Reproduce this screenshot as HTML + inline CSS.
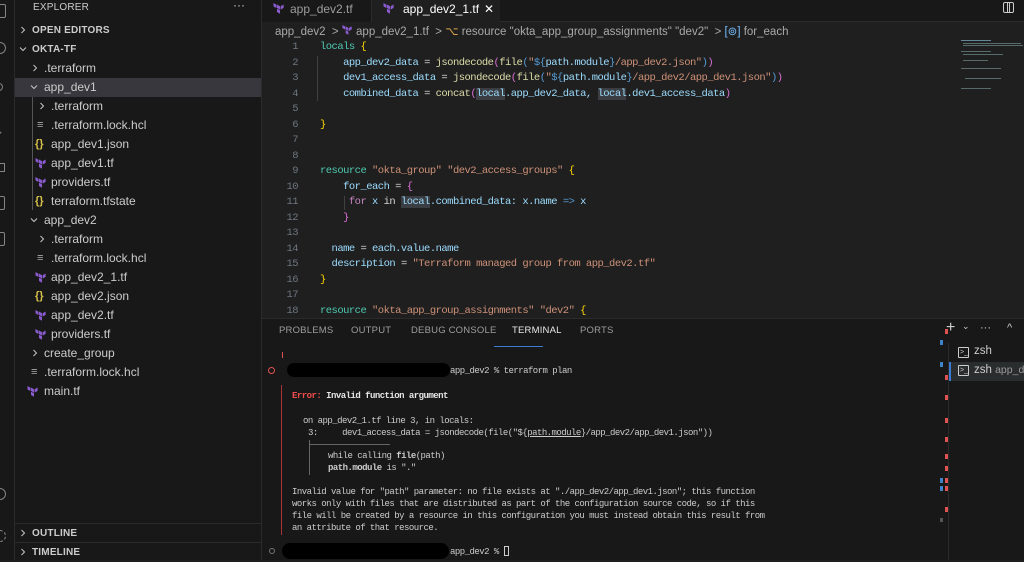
<!DOCTYPE html>
<html><head><meta charset="utf-8">
<style>
*{margin:0;padding:0;box-sizing:border-box}
body{width:1024px;height:560px;overflow:hidden;background:#1f1f1f;font-family:"Liberation Sans",sans-serif;color:#ccc;position:relative}
.abs{position:absolute}
#act{left:0;top:0;width:15px;height:560px;background:#181818;border-right:1px solid #2b2b2b}
#side{left:15px;top:0;width:247px;height:560px;background:#181818;border-right:1px solid #2b2b2b}
.row{position:absolute;left:0;width:246px;height:19px;font-size:12px;line-height:19px;color:#ccc;white-space:nowrap}
.hd{font-size:10px;font-weight:bold;color:#ccc;letter-spacing:.2px}
.chev{position:absolute;top:5px}
.js{color:#d6c14a;font-size:11px;font-weight:bold}
.lines{color:#aaa;font-size:11px}
#tabs{left:262px;top:0;width:762px;height:22px;background:#181818;border-bottom:1px solid #2b2b2b}
.mono{font-family:"Liberation Mono",monospace}
.cl{position:absolute;left:262px;width:690px;height:15.5px;font-size:10.5px;letter-spacing:-0.52px;line-height:15.5px;white-space:pre;color:#9cdcfe}
.ln{position:absolute;width:36px;text-align:right;color:#6e7681;left:0}
.tx{position:absolute;left:58px}
.k{color:#4ec9b0}.s{color:#ce9178}.f{color:#dcdcaa}.y{color:#ffd700}.p{color:#da70d6}.w{color:#d4d4d4}.c{color:#569cd6}.kw{color:#c586c0}
.hl{background:#3a3d41}
#panel{left:262px;top:318px;width:762px;height:242px;background:#181818;border-top:1px solid #2b2b2b}
.pt{position:absolute;top:6px;font-size:9.5px;color:#9d9d9d;letter-spacing:.2px}
.tl{position:absolute;left:292px;font-size:9px;letter-spacing:-0.53px;line-height:12.2px;white-space:pre;color:#ccc}
.mk{position:absolute;left:945px;width:3px;height:5px;background:#e05252}
.mb{position:absolute;left:940px;width:3px;height:5px;background:#3f84c8}
</style></head><body>

<svg width="0" height="0" style="position:absolute"><defs>
<symbol id="tfi" viewBox="0 0 12 12"><path d="M4 1.5l3 1.7v3.4L4 4.9z M7.6 3.2l3 -1.7v3.4l-3 1.7z M0.5 0l3 1.7v3.4L0.5 3.4z M4 5.6l3 1.7v3.4L4 9z" fill="#8a5ccf"/></symbol>
<symbol id="cr" viewBox="0 0 8 8"><path d="M2.5 1l3 3-3 3" fill="none" stroke="#c5c5c5" stroke-width="1"/></symbol>
<symbol id="cd" viewBox="0 0 8 8"><path d="M1 2.5l3 3 3-3" fill="none" stroke="#c5c5c5" stroke-width="1"/></symbol>
</defs></svg>

<div id="act" class="abs">
 <div class="abs" style="left:-4px;top:4px;width:10px;height:14px;border:1.5px solid #858585;border-radius:2px"></div>
 <div class="abs" style="left:-6px;top:42px;width:12px;height:12px;border:1.5px solid #858585;border-radius:50%"></div>
 <div class="abs" style="left:-5px;top:83px;width:8px;height:8px;border:1.5px solid #858585;border-radius:50%"></div>
 <div class="abs" style="left:-4px;top:128px;color:#858585;font-size:10px">&gt;</div>
 <div class="abs" style="left:-4px;top:163px;width:9px;height:9px;border:1.5px solid #858585"></div>
 <div class="abs" style="left:-4px;top:196px;width:9px;height:14px;border:1.5px solid #858585;border-radius:2px"></div>
 <div class="abs" style="left:-4px;top:232px;width:9px;height:14px;border:1.5px solid #858585;border-radius:2px"></div>
 <div class="abs" style="left:-6px;top:488px;width:12px;height:12px;border:1.5px solid #858585;border-radius:50%"></div>
 <div class="abs" style="left:-6px;top:530px;width:12px;height:12px;border:1.5px dashed #858585;border-radius:50%"></div>
</div>

<div id="side" class="abs">
 <div class="row hd" style="top:-2px;left:18px;font-weight:normal;font-size:10px">EXPLORER</div>
 <div class="row" style="top:-4px;left:218px;width:20px;color:#ccc;font-size:12px">···</div>
 <div class="row" style="top:21px"><svg class="chev" style="left:4px" width="8" height="8"><use href="#cr"/></svg><span class="hd abs" style="left:17px">OPEN EDITORS</span></div>
 <div class="row" style="top:40px"><svg class="chev" style="left:4px" width="8" height="8"><use href="#cd"/></svg><span class="hd abs" style="left:17px">OKTA-TF</span></div>
 <div class="row" style="top:59px"><svg class="chev" style="left:16px" width="8" height="8"><use href="#cr"/></svg><span class="abs" style="left:29px">.terraform</span></div>
 <div class="row" style="top:78px;background:#37373d"><svg class="chev" style="left:15px" width="8" height="8"><use href="#cd"/></svg><span class="abs" style="left:29px">app_dev1</span></div>
 <div class="abs" style="left:17px;top:97px;width:1px;height:113px;background:#555"></div>
 <div class="row" style="top:97px"><svg class="chev" style="left:23px" width="8" height="8"><use href="#cr"/></svg><span class="abs" style="left:36px">.terraform</span></div>
 <div class="row" style="top:116px"><span class="abs lines" style="left:22px">&#8801;</span><span class="abs" style="left:36px">.terraform.lock.hcl</span></div>
 <div class="row" style="top:135px"><span class="abs js" style="left:20px">{}</span><span class="abs" style="left:36px">app_dev1.json</span></div>
 <div class="row" style="top:154px"><svg class="abs" style="left:20px;top:4px" width="12" height="12"><use href="#tfi"/></svg><span class="abs" style="left:36px">app_dev1.tf</span></div>
 <div class="row" style="top:173px"><svg class="abs" style="left:20px;top:4px" width="12" height="12"><use href="#tfi"/></svg><span class="abs" style="left:36px">providers.tf</span></div>
 <div class="row" style="top:192px"><span class="abs js" style="left:20px">{}</span><span class="abs" style="left:36px">terraform.tfstate</span></div>
 <div class="row" style="top:211px"><svg class="chev" style="left:15px" width="8" height="8"><use href="#cd"/></svg><span class="abs" style="left:29px">app_dev2</span></div>
 <div class="row" style="top:230px"><svg class="chev" style="left:23px" width="8" height="8"><use href="#cr"/></svg><span class="abs" style="left:36px">.terraform</span></div>
 <div class="row" style="top:249px"><span class="abs lines" style="left:22px">&#8801;</span><span class="abs" style="left:36px">.terraform.lock.hcl</span></div>
 <div class="row" style="top:268px"><svg class="abs" style="left:20px;top:4px" width="12" height="12"><use href="#tfi"/></svg><span class="abs" style="left:36px">app_dev2_1.tf</span></div>
 <div class="row" style="top:287px"><span class="abs js" style="left:20px">{}</span><span class="abs" style="left:36px">app_dev2.json</span></div>
 <div class="row" style="top:306px"><svg class="abs" style="left:20px;top:4px" width="12" height="12"><use href="#tfi"/></svg><span class="abs" style="left:36px">app_dev2.tf</span></div>
 <div class="row" style="top:325px"><svg class="abs" style="left:20px;top:4px" width="12" height="12"><use href="#tfi"/></svg><span class="abs" style="left:36px">providers.tf</span></div>
 <div class="row" style="top:344px"><svg class="chev" style="left:16px" width="8" height="8"><use href="#cr"/></svg><span class="abs" style="left:29px">create_group</span></div>
 <div class="row" style="top:363px"><span class="abs lines" style="left:16px">&#8801;</span><span class="abs" style="left:29px">.terraform.lock.hcl</span></div>
 <div class="row" style="top:382px"><svg class="abs" style="left:12px;top:4px" width="12" height="12"><use href="#tfi"/></svg><span class="abs" style="left:29px">main.tf</span></div>
 <div class="abs" style="left:0;top:523px;width:246px;height:1px;background:#2b2b2b"></div>
 <div class="row" style="top:524px"><svg class="chev" style="left:4px" width="8" height="8"><use href="#cr"/></svg><span class="hd abs" style="left:17px">OUTLINE</span></div>
 <div class="abs" style="left:0;top:542px;width:246px;height:1px;background:#2b2b2b"></div>
 <div class="row" style="top:543px"><svg class="chev" style="left:4px" width="8" height="8"><use href="#cr"/></svg><span class="hd abs" style="left:17px">TIMELINE</span></div>
</div>

<div id="tabs" class="abs">
 <div class="abs" style="left:0;top:0;width:110px;height:22px;background:#181818;border-right:1px solid #2b2b2b;font-size:12px;line-height:18px;color:#9d9d9d"><svg class="abs" style="left:11px;top:3px" width="12" height="12"><use href="#tfi"/></svg><span class="abs" style="left:28px">app_dev2.tf</span></div>
 <div class="abs" style="left:110px;top:0;width:128px;height:22px;background:#1f1f1f;font-size:12px;line-height:18px;color:#fff"><svg class="abs" style="left:11px;top:3px" width="12" height="12"><use href="#tfi"/></svg><span class="abs" style="left:31px">app_dev2_1.tf</span><span class="abs" style="left:112px;font-size:12px">✕</span></div>
 <div class="abs" style="left:741px;top:2px;width:11px;height:11px;border:1.3px solid #ccc;border-radius:2px"><div class="abs" style="left:3px;top:0;width:3px;height:9px;border-left:1px solid #ccc;border-right:1px solid #ccc"></div></div>
</div>

<div class="abs" style="left:275px;top:24px;font-size:11.5px;color:#a9a9a9;white-space:nowrap">app_dev2 &nbsp;&gt; <svg style="vertical-align:-1px" width="11" height="11"><use href="#tfi"/></svg> app_dev2_1.tf &nbsp;&gt; <span style="color:#d6a34a">⌥</span> resource "okta_app_group_assignments" "dev2" &nbsp;&gt; <span style="color:#75beff">[⊚]</span> for_each</div>

<div class="mono">
<div class="cl" style="top:40px"><span class="ln">1</span><span class="tx"><span class="k">locals</span> <span class="y">{</span></span></div>
<div class="cl" style="top:55.5px"><span class="ln">2</span><span class="tx">    app_dev2_data <span class="w">=</span> <span class="f">jsondecode</span><span class="p">(</span><span class="f">file</span><span class="c">(</span><span class="s">"<span class="c">${</span><span style="color:#9cdcfe">path.module</span><span class="c">}</span>/app_dev2.json"</span><span class="c">)</span><span class="p">)</span></span></div>
<div class="cl" style="top:71px"><span class="ln">3</span><span class="tx">    dev1_access_data <span class="w">=</span> <span class="f">jsondecode</span><span class="p">(</span><span class="f">file</span><span class="c">(</span><span class="s">"<span class="c">${</span><span style="color:#9cdcfe">path.module</span><span class="c">}</span>/app_dev2/app_dev1.json"</span><span class="c">)</span><span class="p">)</span></span></div>
<div class="cl" style="top:86.5px"><span class="ln">4</span><span class="tx">    combined_data <span class="w">=</span> <span class="f">concat</span><span class="p">(</span><span class="hl">local</span>.app_dev2_data, <span class="hl">local</span>.dev1_access_data<span class="p">)</span></span></div>
<div class="cl" style="top:102px"><span class="ln">5</span></div>
<div class="cl" style="top:117.5px"><span class="ln">6</span><span class="tx"><span class="y">}</span></span></div>
<div class="cl" style="top:133px"><span class="ln">7</span></div>
<div class="cl" style="top:148.5px"><span class="ln">8</span></div>
<div class="cl" style="top:164px"><span class="ln">9</span><span class="tx"><span class="k">resource</span> <span class="s">"okta_group"</span> <span class="s">"dev2_access_groups"</span> <span class="y">{</span></span></div>
<div class="cl" style="top:179.5px"><span class="ln">10</span><span class="tx">    for_each <span class="w">=</span> <span class="p">{</span></span></div>
<div class="cl" style="top:195px"><span class="ln">11</span><span class="tx">     <span class="kw">for</span> x <span class="w">in</span> <span class="hl">local</span>.combined_data: x.name <span class="c">=&gt;</span> x</span></div>
<div class="cl" style="top:210.5px"><span class="ln">12</span><span class="tx">    <span class="p">}</span></span></div>
<div class="cl" style="top:226px"><span class="ln">13</span></div>
<div class="cl" style="top:241.5px"><span class="ln">14</span><span class="tx">  name <span class="w">=</span> each.value.name</span></div>
<div class="cl" style="top:257px"><span class="ln">15</span><span class="tx">  description <span class="w">=</span> <span class="s">"Terraform managed group from app_dev2.tf"</span></span></div>
<div class="cl" style="top:272.5px"><span class="ln">16</span><span class="tx"><span class="y">}</span></span></div>
<div class="cl" style="top:288px"><span class="ln">17</span></div>
<div class="cl" style="top:303.5px"><span class="ln">18</span><span class="tx"><span class="k">resource</span> <span class="s">"okta_app_group_assignments"</span> <span class="s">"dev2"</span> <span class="y">{</span></span></div>
</div>
<div class="abs" style="left:317px;top:56px;width:1px;height:45px;background:#404040"></div>
<div class="abs" style="left:344px;top:196px;width:1px;height:14px;background:#404040"></div>

<div class="abs" style="left:961px;top:40px;width:60px;height:55px;opacity:.55">
 <div class="abs" style="left:0;top:0;width:30px;height:1px;background:#9cdcfe"></div>
 <div class="abs" style="left:2px;top:3px;width:58px;height:1px;background:#8aa"></div>
 <div class="abs" style="left:2px;top:5px;width:60px;height:1px;background:#8aa"></div>
 <div class="abs" style="left:0;top:11px;width:30px;height:1px;background:#8aa"></div>
 <div class="abs" style="left:2px;top:14px;width:40px;height:1px;background:#8aa"></div>
 <div class="abs" style="left:2px;top:20px;width:25px;height:1px;background:#8aa"></div>
 <div class="abs" style="left:0;top:28px;width:40px;height:1px;background:#8aa"></div>
 <div class="abs" style="left:4px;top:38px;width:36px;height:1px;background:#8aa"></div>
 <div class="abs" style="left:0;top:48px;width:30px;height:1px;background:#8aa"></div>
</div>

<div id="panel" class="abs">
 <span class="pt" style="left:17px">PROBLEMS</span>
 <span class="pt" style="left:89px">OUTPUT</span>
 <span class="pt" style="left:149px">DEBUG CONSOLE</span>
 <span class="pt" style="left:250px;color:#e7e7e7">TERMINAL</span>
 <div class="abs" style="left:232px;top:27px;width:49px;height:1px;background:#3b7bd4"></div>
 <span class="pt" style="left:318px">PORTS</span>
 <span class="abs" style="left:684px;top:0px;font-size:16px;color:#ccc">+</span>
 <span class="abs" style="left:700px;top:2px;font-size:9px;color:#ccc">⌄</span>
 <span class="abs" style="left:718px;top:3px;font-size:11px;color:#ccc">···</span>
 <span class="abs" style="left:745px;top:3px;font-size:11px;color:#ccc">^</span>
</div>

<div class="abs" style="left:282px;top:352px;width:1px;height:6px;background:#e05252"></div>
<div class="abs" style="left:268px;top:367px;width:7px;height:7px;border:1.2px solid #e05252;border-radius:50%"></div>
<div class="abs" style="left:287px;top:363px;width:163px;height:14px;background:#000;border-radius:7px"></div>
<div class="abs" style="left:281px;top:385px;width:1px;height:150px;background:#a33"></div>
<div class="mono">
<div class="tl" style="top:365px;left:450px">app_dev2 % terraform plan</div>
<div class="tl" style="top:390px"><b style="color:#f14c4c">Error: </b><b style="color:#e5e5e5">Invalid function argument</b></div>
<div class="tl" style="top:415px;left:303px">on app_dev2_1.tf line 3, in locals:</div>
<div class="tl" style="top:427px;left:308px">3:     dev1_access_data = jsondecode(file("${<u>path.module</u>}/app_dev2/app_dev1.json"))</div>
<div class="tl" style="top:450px;left:328px">while calling <b>file</b>(path)</div>
<div class="tl" style="top:462px;left:328px"><b>path.module</b> is "."</div>
<div class="tl" style="top:486px">Invalid value for "path" parameter: no file exists at "./app_dev2/app_dev1.json"; this function</div>
<div class="tl" style="top:498px">works only with files that are distributed as part of the configuration source code, so if this</div>
<div class="tl" style="top:510px">file will be created by a resource in this configuration you must instead obtain this result from</div>
<div class="tl" style="top:522px">an attribute of that resource.</div>
<div class="tl" style="top:546px;left:450px">app_dev2 % <span style="display:inline-block;width:5px;height:10px;border:1px solid #ccc;vertical-align:-2px"></span></div>
</div>
<div class="abs" style="left:309px;top:440px;width:1px;height:35px;background:#666"></div>
<div class="abs" style="left:309px;top:444px;width:81px;height:1px;background:#666"></div>
<div class="abs" style="left:269px;top:548px;width:6px;height:6px;border:1px solid #777;border-radius:50%"></div>
<div class="abs" style="left:282px;top:543px;width:167px;height:16px;background:#000;border-radius:8px"></div>

<div class="abs" style="left:948px;top:343px;width:1px;height:217px;background:#2b2b2b"></div>
<div class="abs" style="left:949px;top:362px;width:75px;height:19px;background:#2a2d2e;border-left:2px solid #3b7bd4"></div>
<div class="abs" style="left:958px;top:347px;width:11px;height:11px;border:1px solid #ccc;border-radius:1px;font-size:7px;line-height:9px;color:#ccc;padding-left:1px">&gt;_</div>
<div class="abs" style="left:974px;top:345px;font-size:11.5px;color:#ccc">zsh</div>
<div class="abs" style="left:958px;top:365px;width:11px;height:11px;border:1px solid #ccc;border-radius:1px;font-size:7px;line-height:9px;color:#ccc;padding-left:1px">&gt;_</div>
<div class="abs" style="left:974px;top:364px;font-size:11.5px;color:#ccc;white-space:nowrap">zsh <span style="color:#999;font-size:10.5px">app_d</span></div>
<div class="mk" style="top:329px"></div>
<div class="mb" style="top:340px"></div>
<div class="mb" style="top:362px"></div>
<div class="mk" style="top:375px"></div>
<div class="mk" style="top:395px"></div>
<div class="mk" style="top:418px"></div>
<div class="mk" style="top:437px"></div>
<div class="mk" style="top:454px"></div>
<div class="mk" style="top:466px"></div>
<div class="mb" style="top:478px"></div><div class="mk" style="top:478px"></div>
<div class="mb" style="top:486px"></div><div class="mk" style="top:486px"></div>
<div class="mk" style="top:507px"></div>
<div class="abs" style="left:940px;top:518px;width:3px;height:4px;background:#555"></div>
</body></html>
